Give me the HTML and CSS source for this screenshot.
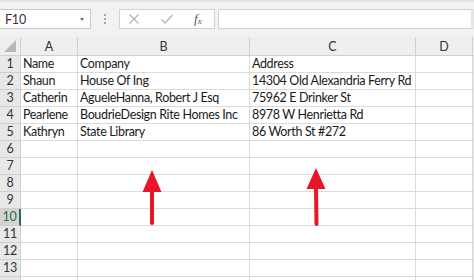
FILE: index.html
```
<!DOCTYPE html>
<html>
<head>
<meta charset="utf-8">
<link rel="stylesheet" href="styles.css">
</head>
<body>
<div class="app">
  <div class="toolbar">
    <div class="namebox"><span class="ref">F10</span><span class="dd"></span></div>
    <div class="sep"><i></i><i></i><i></i></div>
    <div class="fbtns">
      <svg class="ico" width="12" height="12" viewBox="0 0 12 12"><path d="M1.5 1.5 L10.5 10.5 M10.5 1.5 L1.5 10.5" stroke="#b4b4b4" stroke-width="1.2" fill="none"/></svg>
      <svg class="ico" width="14" height="12" viewBox="0 0 14 12"><path d="M1.5 6.5 L5 10 L12.5 2" stroke="#b4b4b4" stroke-width="1.3" fill="none"/></svg>
      <span class="fx">f<sub>x</sub></span>
    </div>
    <div class="finput"></div>
  </div>
  <div class="grid">
    <div class="ch corner"><span class="tri"></span></div>
    <div class="ch">A</div><div class="ch">B</div><div class="ch">C</div><div class="ch">D</div><div class="ch edge"></div>

    <div class="rh">1</div><div class="c">Name</div><div class="c">Company</div><div class="c">Address</div><div class="c"></div><div class="c edge"></div>
    <div class="rh">2</div><div class="c">Shaun</div><div class="c">House Of Ing</div><div class="c">14304 Old Alexandria Ferry Rd</div><div class="c"></div><div class="c edge"></div>
    <div class="rh">3</div><div class="c">Catherin</div><div class="c">AgueleHanna, Robert J Esq</div><div class="c">75962 E Drinker St</div><div class="c"></div><div class="c edge"></div>
    <div class="rh">4</div><div class="c">Pearlene</div><div class="c">BoudrieDesign Rite Homes Inc</div><div class="c">8978 W Henrietta Rd</div><div class="c"></div><div class="c edge"></div>
    <div class="rh">5</div><div class="c">Kathryn</div><div class="c">State Library</div><div class="c">86 Worth St #272</div><div class="c"></div><div class="c edge"></div>
    <div class="rh">6</div><div class="c"></div><div class="c"></div><div class="c"></div><div class="c"></div><div class="c edge"></div>
    <div class="rh">7</div><div class="c"></div><div class="c"></div><div class="c"></div><div class="c"></div><div class="c edge"></div>
    <div class="rh">8</div><div class="c"></div><div class="c"></div><div class="c"></div><div class="c"></div><div class="c edge"></div>
    <div class="rh">9</div><div class="c"></div><div class="c"></div><div class="c"></div><div class="c"></div><div class="c edge"></div>
    <div class="rh sel">10</div><div class="c"></div><div class="c"></div><div class="c"></div><div class="c"></div><div class="c edge"></div>
    <div class="rh">11</div><div class="c"></div><div class="c"></div><div class="c"></div><div class="c"></div><div class="c edge"></div>
    <div class="rh">12</div><div class="c"></div><div class="c"></div><div class="c"></div><div class="c"></div><div class="c edge"></div>
    <div class="rh">13</div><div class="c"></div><div class="c"></div><div class="c"></div><div class="c"></div><div class="c edge"></div>
    <div class="rh last"></div><div class="c"></div><div class="c"></div><div class="c"></div><div class="c"></div><div class="c edge"></div>
  </div>
  <svg class="arrows" width="474" height="280" viewBox="0 0 474 280">
    <polygon points="142.5,192 152,170 161.5,192" fill="#e8162a"/>
    <line x1="152" y1="190" x2="152" y2="223" stroke="#e8162a" stroke-width="4" stroke-linecap="round"/>
    <polygon points="306.5,189 316,168 325.5,189" fill="#e8162a"/>
    <line x1="316" y1="187" x2="316.5" y2="224" stroke="#e8162a" stroke-width="4" stroke-linecap="round"/>
  </svg>
</div>
</body>
</html>
```
FILE: styles.css
```
html, body { margin: 0; padding: 0; }
body { width: 474px; height: 280px; overflow: hidden; background: #fff; font-family: Lato, "Open Sans", sans-serif; color: #222; }
.app { position: relative; width: 474px; height: 280px; overflow: hidden; }
.toolbar { height: 37px; box-sizing: border-box; background: #f2f2f2; border-top: 2px solid #e2e2e2; display: flex; align-items: flex-start; padding-top: 7px; }
.namebox { width: 91px; height: 20px; box-sizing: border-box; background: #fff; border: 1px solid #c9c9c9; border-left: none; display: flex; align-items: center; justify-content: space-between; padding: 0 6px 0 5px; }
.ref { font-size: 12.5px; color: #333; letter-spacing: -0.2px; }
.dd { width: 0; height: 0; border-left: 2.5px solid transparent; border-right: 2.5px solid transparent; border-top: 3px solid #707070; }
.sep { width: 28px; height: 20px; display: flex; flex-direction: column; align-items: center; justify-content: center; gap: 2px; }
.sep i { display: block; width: 2px; height: 2px; background: #a8a8a8; }
.fbtns { width: 96px; height: 20px; box-sizing: border-box; background: #fff; border: 1px solid #d2d2d2; display: flex; align-items: center; padding-left: 8px; gap: 20px; }
.fx { font-family: "Liberation Serif", serif; font-style: italic; font-size: 13px; color: #555; line-height: 1; }
.fx sub { font-size: 9px; vertical-align: -1px; }
.finput { margin-left: 3px; flex: 1; height: 20px; box-sizing: border-box; background: #fff; border: 1px solid #d2d2d2; border-right: 3px solid #e6e6e6; }
.grid { display: grid; grid-template-columns: 21px 57px 172px 166px 57px 1fr; grid-template-rows: 19px; grid-auto-rows: 17px; }
.grid > div { box-sizing: border-box; border-right: 1px solid #dadada; border-bottom: 1px solid #dadada; font-size: 12.5px; line-height: 16px; white-space: nowrap; }
.grid > .ch { background: #efefef; border-color: #d0d0d0; color: #333; text-align: center; line-height: 19px; font-size: 12.5px; }
.grid > .corner { position: relative; }
.tri { position: absolute; right: 4px; bottom: 3px; width: 0; height: 0; border-left: 12px solid transparent; border-bottom: 12px solid #b8b8b8; }
.grid > .rh { background: #e8e8e8; border-color: #cfcfcf; color: #333; text-align: center; font-size: 12.5px; letter-spacing: -0.2px; }
.grid > .rh.sel { background: #d3d3d3; color: #217346; border-right: 2px solid #217346; }
.grid > .c { padding-left: 2px; color: #1a1a1a; letter-spacing: -0.35px; }
.grid > .edge { border-right: none; background: #f4f4f4; }
.grid > .c.edge { background: #fff; border-left: 1px solid #e8e8e8; }
.arrows { position: absolute; left: 0; top: 0; pointer-events: none; }
```
